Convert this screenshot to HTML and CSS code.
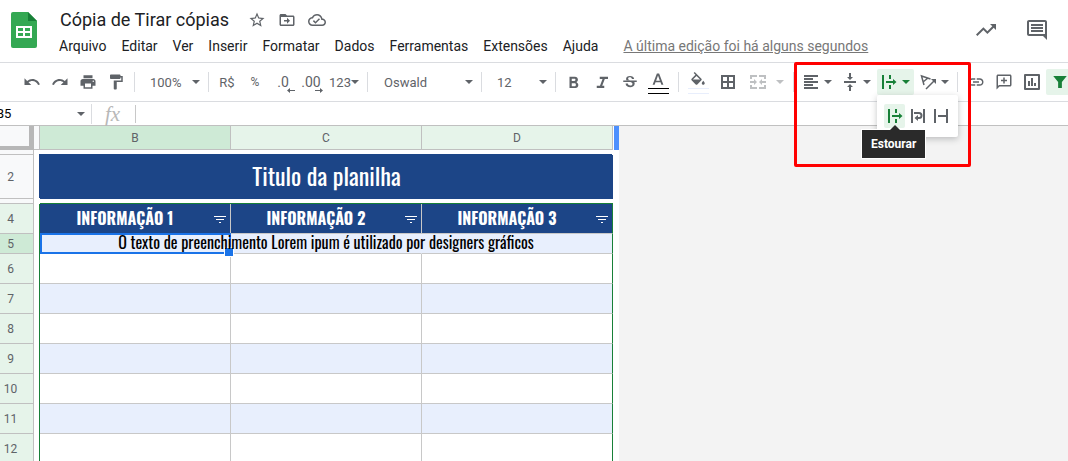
FILE: index.html
```
<!DOCTYPE html>
<html lang="pt-BR">
<head>
    <meta charset="UTF-8">
    <meta name="viewport" content="width=device-width, initial-scale=1.0">
    <title>Cópia de Tirar cópias</title>
    <link rel="stylesheet" href="styles.css">
</head>
<body>
    <header class="header">
        <svg class="logo" viewBox="0 0 26 36">
            <path fill="#34a853" d="M2 0h15l9 9v25a2 2 0 0 1-2 2H2a2 2 0 0 1-2-2V2a2 2 0 0 1 2-2z"/>
            <path fill="#188038" d="M17 0l9 9h-9z"/>
            <path fill="#fff" fill-rule="evenodd" d="M5 14h16v12H5zM7 16v3h5v-3zM14 16v3h5v-3zM7 21v3h5v-3zM14 21v3h5v-3z"/>
        </svg>
        <div class="doc">
            <div class="title-row">
                <h1>Cópia de Tirar cópias</h1>
                <button class="icon-btn" aria-label="Com estrela"><svg class="icon" viewBox="0 0 24 24"><path d="M22 9.24l-7.19-.62L12 2 9.19 8.63 2 9.24l5.46 4.73L5.82 21 12 17.27 18.18 21l-1.63-7.03L22 9.24zM12 15.4l-3.76 2.27 1-4.28-3.32-2.88 4.38-.38L12 6.1l1.71 4.04 4.38.38-3.32 2.88 1 4.28L12 15.4z"/></svg></button>
                <button class="icon-btn" aria-label="Mover"><svg class="icon" viewBox="0 0 24 24"><path d="M20 6h-8l-2-2H4c-1.100 0-2 .9-2 2v12c0 1.100.9 2 2 2h16c1.100 0 2-.9 2-2V8c0-1.100-.9-2-2-2zm0 12H4V8h16v10zM12 17l4-4-4-4v3H8v2h4z"/></svg></button>
                <button class="icon-btn" aria-label="Status do documento"><svg class="icon" viewBox="0 0 24 24"><path d="M19.350 10.040C18.670 6.590 15.640 4 12 4 9.110 4 6.600 5.640 5.350 8.040 2.340 8.360 0 10.910 0 14c0 3.310 2.690 6 6 6h13c2.760 0 5-2.240 5-5 0-2.640-2.050-4.780-4.650-4.960zM19 18H6c-2.210 0-4-1.790-4-4 0-2.050 1.530-3.760 3.560-3.970l1.070-.11.5-.95C8.080 7.140 9.940 6 12 6c2.620 0 4.880 1.860 5.390 4.430l.3 1.500 1.530.11c1.560.1 2.780 1.410 2.780 2.960 0 1.650-1.350 3-3 3zm-9-3.820l-2.090-2.090L6.500 13.500 10 17l6.010-6.010-1.410-1.410z"/></svg></button>
            </div>
            <nav class="menus">
                <button>Arquivo</button>
                <button>Editar</button>
                <button>Ver</button>
                <button>Inserir</button>
                <button>Formatar</button>
                <button>Dados</button>
                <button>Ferramentas</button>
                <button>Extensões</button>
                <button>Ajuda</button>
                <a href="#historico">A última edição foi há alguns segundos</a>
            </nav>
        </div>
        <div class="header-actions">
            <button class="icon-btn" aria-label="Atividade"><svg viewBox="0 0 24 24" width="24" height="24"><path d="M16 6l2.290 2.290-4.880 4.880-4-4L2 16.590 3.410 18l6-6 4 4 6.300-6.290L22 12V6z"/></svg></button>
            <button class="icon-btn" aria-label="Comentários"><svg viewBox="0 0 24 24" width="24" height="24"><path d="M22 4c0-1.100-.9-2-2-2H4c-1.100 0-2 .9-2 2v12c0 1.100.9 2 2 2h14l4 4V4zM4 16V4h16v12zM6 12h12v2H6zM6 9h12v2H6zM6 6h12v2H6z"/></svg></button>
        </div>
    </header>

    <div class="toolbar">
        <div class="group">
            <button class="tool" aria-label="Desfazer"><svg class="icon" viewBox="0 0 24 24"><path d="M12.500 8c-2.650 0-5.050.99-6.900 2.600L2 7v9h9l-3.620-3.620c1.390-1.160 3.160-1.880 5.120-1.880 3.540 0 6.550 2.310 7.600 5.500l2.370-.78C21.080 11.030 17.150 8 12.500 8z"/></svg></button>
            <button class="tool" aria-label="Refazer"><svg class="icon" viewBox="0 0 24 24"><path d="M18.400 10.600C16.550 8.990 14.150 8 11.500 8c-4.650 0-8.580 3.030-9.960 7.220L3.900 16c1.050-3.190 4.050-5.500 7.600-5.500 1.950 0 3.730.72 5.120 1.880L13 16h9V7l-3.600 3.600z"/></svg></button>
            <button class="tool" aria-label="Imprimir"><svg class="icon" viewBox="0 0 24 24"><path d="M19 8H5c-1.660 0-3 1.340-3 3v6h4v4h12v-4h4v-6c0-1.660-1.340-3-3-3zm-3 11H8v-5h8v5zm3-7c-.55 0-1-.45-1-1s.45-1 1-1 1 .45 1 1-.45 1-1 1zm-1-9H6v4h12V3z"/></svg></button>
            <button class="tool" aria-label="Pintar formatação"><svg class="icon" viewBox="0 0 24 24"><path d="M18 4V3c0-.55-.45-1-1-1H5c-.55 0-1 .45-1 1v4c0 .55.45 1 1 1h12c.55 0 1-.45 1-1V6h1v4H9v11c0 .55.45 1 1 1h2c.55 0 1-.45 1-1v-9h8V4h-3z"/></svg></button>
        </div>
        <div class="dropdown">
            <select aria-label="Zoom"><option>100%</option></select>
            <span class="caret"></span>
        </div>
        <div class="group">
            <button class="tool">R$</button>
            <button class="tool percent">%</button>
            <button class="tool decimal">.0<svg viewBox="0 0 8 5"><path d="M0 2.500L3 0v2h5v1H3v2z"/></svg></button>
            <button class="tool decimal">.00<svg viewBox="0 0 8 5"><path d="M8 2.500L5 0v2H0v1h5v2z"/></svg></button>
            <button class="tool formats">123<span class="caret"></span></button>
        </div>
        <div class="dropdown font">
            <select aria-label="Fonte"><option>Oswald</option></select>
            <span class="caret"></span>
        </div>
        <div class="dropdown">
            <select aria-label="Tamanho da fonte"><option>12</option></select>
            <span class="caret"></span>
        </div>
        <div class="group">
            <button class="tool" aria-label="Negrito"><svg class="icon" viewBox="0 0 24 24"><path d="M15.600 11.790c.97-.67 1.650-1.770 1.650-2.790 0-2.260-1.750-4-4-4H6v15h8.040c2.090 0 3.710-1.700 3.710-3.790 0-1.520-.86-2.820-2.150-3.420zM9 7.500h3.500c.83 0 1.500.67 1.500 1.500s-.67 1.500-1.500 1.500H9v-3zm4 10H9V13.500h4c.83 0 1.500.67 1.500 2s-.67 2-1.500 2z"/></svg></button>
            <button class="tool" aria-label="Itálico"><svg class="icon" viewBox="0 0 24 24"><path d="M9 5v3h3.710l-3.420 9H5v3h10v-3h-2.710l3.420-9H20V5z"/></svg></button>
            <button class="tool" aria-label="Tachado"><svg class="icon" viewBox="0 0 24 24"><path d="M7.240 9.750c-.86-1.530-.46-3.600.84-4.700C10.600 2.900 17.600 3.500 17.500 8h-3c0-3-5.100-2.900-5-.4.100 1 1 1.600 2.500 2.150zM21 12v-2H3v2h9.620c2.500.9 2.600 1.500 2.600 2.500 0 2.800-6.100 2.700-6.100-.5h-3c-.1 6.500 12.100 6.800 12.100.4 0-.9-.1-1.700-.5-2.400z"/></svg></button>
            <button class="tool color" aria-label="Cor do texto"><svg class="icon" viewBox="0 0 24 24"><path d="M10.500 2L4.800 17h2.700l1.150-3.200h6.700L16.500 17h2.700L13.500 2zm-1 9.500L12 4.800l2.500 6.700z"/></svg></button>
        </div>
        <div class="group spaced">
            <button class="tool color fill" aria-label="Cor de preenchimento"><svg class="icon" viewBox="0 0 24 24"><path d="M16.560 8.940L7.620 0 6.210 1.410l2.380 2.380-5.150 5.150c-.59.59-.59 1.540 0 2.120l5.500 5.500c.59.59 1.540.59 2.120 0l5.500-5.500c.59-.58.59-1.530 0-2.120zM5.210 10L10 5.210 14.790 10zM19 11.500s-2 2.170-2 3.500c0 1.100.9 2 2 2s2-.9 2-2c0-1.330-2-3.500-2-3.500z"/></svg></button>
            <button class="tool" aria-label="Bordas"><svg class="icon" viewBox="0 0 18 18"><path d="M2 2v14h14V2zm6 12H4v-4h4zm0-6H4V4h4zm6 6h-4v-4h4zm0-6h-4V4h4z"/></svg></button>
            <button class="tool merge" disabled aria-label="Mesclar células"><svg class="icon" viewBox="0 0 18 18"><path d="M1 2h7v2H3v2H1zM10 2h7v4h-2V4h-5zM1 12h2v2h5v2H1zM15 12h2v4h-7v-2h5zM1 8h4V6l3 3-3 3v-2H1zM17 8h-4V6l-3 3 3 3v-2h4z"/></svg><span class="caret"></span></button>
        </div>
        <div class="group align-group">
            <button class="tool wide" aria-label="Alinhamento horizontal"><svg class="icon" viewBox="0 0 18 18"><path d="M2 2h14v2H2zM2 5h9v2H2zM2 8h14v2H2zM2 11h9v2H2zM2 14h14v2H2z"/></svg><span class="caret"></span></button>
            <button class="tool wide" aria-label="Alinhamento vertical"><svg class="icon" viewBox="0 0 18 18"><path d="M6 14h2v4h2v-4h2l-3-3zM12 4h-2V0H8v4H6l3 3zM3 8v2h12V8z"/></svg><span class="caret"></span></button>
            <div class="wrap-control">
                <button class="tool wide active" aria-label="Ajuste de texto"><svg class="icon" viewBox="0 0 18 18"><path d="M2 2h2v14H2zM9 2h2v4H9zM9 12h2v4H9zM6 8h7V6l3.500 3-3.500 3v-2H6z"/></svg><span class="caret"></span></button>
                <div class="wrap-menu">
                    <button class="active" aria-label="Estourar"><svg class="icon" viewBox="0 0 18 18"><path d="M2 2h2v14H2zM9 2h2v4H9zM9 12h2v4H9zM6 8h7V6l3.500 3-3.500 3v-2H6z"/></svg></button>
                    <button aria-label="Ajustar"><svg class="icon" viewBox="0 0 18 18"><path d="M2 2h2v14H2zM14 2h2v14h-2zM5 5h5a3.500 3.500 0 0 1 0 7H9v2l-3.500-3L9 8v2h1a1.500 1.500 0 0 0 0-3H5z"/></svg></button>
                    <button aria-label="Cortar"><svg class="icon" viewBox="0 0 18 18"><path d="M2 2h2v14H2zM14 2h2v14h-2zM6 8h8v2H6z"/></svg></button>
                    <span class="tooltip" role="tooltip">Estourar</span>
                </div>
            </div>
            <button class="tool wide" aria-label="Rotação de texto"><svg class="icon" viewBox="0 0 18 18"><path fill="none" stroke="#5f6368" stroke-width="1.500" d="M5 12L2.500 3l9 3M9 5l-5 4M7 16l8-8"/><path d="M17 6v5l-5-5z"/></svg><span class="caret"></span></button>
            <div class="highlight"></div>
        </div>
        <div class="group">
            <button class="tool" aria-label="Inserir link"><svg class="icon" viewBox="0 0 24 24"><path d="M3.900 12c0-1.710 1.390-3.100 3.100-3.100h4V7H7c-2.760 0-5 2.240-5 5s2.240 5 5 5h4v-1.900H7c-1.710 0-3.100-1.390-3.100-3.100zM8 13h8v-2H8v2zm9-6h-4v1.900h4c1.710 0 3.100 1.390 3.100 3.100s-1.390 3.100-3.100 3.100h-4V17h4c2.760 0 5-2.240 5-5s-2.240-5-5-5z"/></svg></button>
            <button class="tool" aria-label="Inserir comentário"><svg class="icon" viewBox="0 0 24 24"><path d="M20 2H4c-1.100 0-2 .9-2 2v18l4-4h14c1.100 0 2-.9 2-2V4c0-1.100-.9-2-2-2zm0 14H5.200L4 17.200V4h16zM11 14h2v-3h3V9h-3V6h-2v3H8v2h3z"/></svg></button>
            <button class="tool" aria-label="Inserir gráfico"><svg class="icon" viewBox="0 0 18 18"><path d="M2 1h14a1 1 0 0 1 1 1v14a1 1 0 0 1-1 1H2a1 1 0 0 1-1-1V2a1 1 0 0 1 1-1zm1 2v12h12V3zM5 8h2v5H5zM8 5h2v8H8zM11 10h2v3h-2z"/></svg></button>
            <button class="tool active" aria-label="Filtro"><svg class="icon" viewBox="0 0 24 24"><path d="M3 4h18l-6.500 8v8h-5v-8z"/></svg></button>
        </div>
    </div>

    <div class="formula-bar">
        <div class="name-box">
            <input type="text" value="B5" aria-label="Caixa de nome">
            <span class="caret"></span>
        </div>
        <label class="fx" for="formula">fx</label>
        <input class="formula" id="formula" type="text">
    </div>

    <main class="sheet">
        <table>
            <colgroup>
                <col class="col-head">
                <col class="col-edge">
                <col class="col-data">
                <col class="col-data">
                <col class="col-data">
                <col class="col-edge">
            </colgroup>
            <thead>
                <tr class="letters">
                    <th class="corner"></th>
                    <th class="edge"></th>
                    <th class="current">B</th>
                    <th>C</th>
                    <th>D</th>
                    <th class="freeze"></th>
                </tr>
            </thead>
            <tbody>
                <tr class="thin"><th></th><td></td><td colspan="3"></td><td></td></tr>
                <tr class="title">
                    <th>2</th><td></td>
                    <td class="banner" colspan="3">Titulo da planilha</td>
                    <td></td>
                </tr>
                <tr class="thin above-range"><th></th><td></td><td colspan="3"></td><td></td></tr>
                <tr class="range names">
                    <th>4</th><td></td>
                    <td>INFORMAÇÃO 1<button aria-label="Filtrar informação 1"><svg viewBox="0 0 12 7"><path d="M0 0h12v1H0zM2 3h8v1H2zM5 6h2v1H5z"/></svg></button></td>
                    <td>INFORMAÇÃO 2<button aria-label="Filtrar informação 2"><svg viewBox="0 0 12 7"><path d="M0 0h12v1H0zM2 3h8v1H2zM5 6h2v1H5z"/></svg></button></td>
                    <td>INFORMAÇÃO 3<button aria-label="Filtrar informação 3"><svg viewBox="0 0 12 7"><path d="M0 0h12v1H0zM2 3h8v1H2zM5 6h2v1H5z"/></svg></button></td>
                    <td></td>
                </tr>
                <tr class="range short band">
                    <th class="current">5</th><td></td>
                    <td class="selected"><span class="selection"></span></td>
                    <td class="spill"><div>O texto de preenchimento Lorem ipum é utilizado por designers gráficos</div></td>
                    <td></td><td></td>
                </tr>
                <tr class="range"><th>6</th><td></td><td></td><td></td><td></td><td></td></tr>
                <tr class="range band"><th>7</th><td></td><td></td><td></td><td></td><td></td></tr>
                <tr class="range"><th>8</th><td></td><td></td><td></td><td></td><td></td></tr>
                <tr class="range band"><th>9</th><td></td><td></td><td></td><td></td><td></td></tr>
                <tr class="range"><th>10</th><td></td><td></td><td></td><td></td><td></td></tr>
                <tr class="range band"><th>11</th><td></td><td></td><td></td><td></td><td></td></tr>
                <tr class="range"><th>12</th><td></td><td></td><td></td><td></td><td></td></tr>
            </tbody>
        </table>
    </main>
</body>
</html>
```
FILE: styles.css
```
* {
    box-sizing: border-box;
}

body {
    margin: 0;
    height: 100vh;
    display: flex;
    flex-direction: column;
    overflow: hidden;
    background: #fff;
    color: #202124;
    font-family: Roboto, "Liberation Sans", sans-serif;
    font-size: 14px;
}

button,
input,
select {
    margin: 0;
    padding: 0;
    border: 0;
    background: none;
    color: inherit;
    font: inherit;
}

button {
    cursor: pointer;
}

svg {
    display: block;
    fill: #5f6368;
}

.icon {
    width: 18px;
    height: 18px;
    flex: none;
}

.caret {
    flex: none;
    border: 4px solid transparent;
    border-top-color: #5f6368;
    border-bottom: 0;
}

/* header */
.header {
    display: flex;
    flex: none;
    height: 63px;
    border-bottom: 1px solid #dadce0;
}

.logo {
    width: 26px;
    height: 36px;
    margin: 12px 15px 0 11px;
}

.doc {
    flex: 1;
    padding-top: 8px;
}

.title-row {
    display: flex;
    align-items: center;
    gap: 12px;
    height: 24px;
    padding-left: 8px;
}

h1 {
    margin: 0 7px 0 0;
    font-size: 18px;
    font-weight: 400;
    line-height: 24px;
}

.menus {
    display: flex;
    align-items: center;
    gap: 1px;
    height: 28px;
    white-space: nowrap;
}

.menus button {
    padding: 0 7px;
}

.menus a {
    margin-left: 17px;
    color: #777;
}

.header-actions {
    display: flex;
    gap: 27px;
    padding: 18px 19px 0 0;
    align-items: flex-start;
}

/* toolbar */
.toolbar {
    display: flex;
    align-items: center;
    flex: none;
    height: 39px;
    padding-left: 18px;
    border-bottom: 1px solid #dadce0;
    color: #5f6368;
    font-size: 13px;
    white-space: nowrap;
}

.group {
    display: flex;
    flex: none;
}

.group + .dropdown::before,
.dropdown + .group::before,
.dropdown + .dropdown::before,
.group + .group::before {
    content: "";
    flex: none;
    align-self: center;
    width: 1px;
    height: 20px;
    margin: 0 4px;
    background: #dadce0;
}

.tool {
    display: flex;
    align-items: center;
    justify-content: center;
    flex: none;
    width: 28px;
    height: 26px;
}

.tool:disabled {
    opacity: 0.4;
}

.percent {
    font-size: 12px;
}

.dropdown {
    display: flex;
    align-items: center;
    flex: none;
    width: 74px;
    height: 26px;
}

.dropdown select {
    flex: 1;
    min-width: 0;
    padding-left: 11px;
    appearance: none;
}

.dropdown .caret {
    margin-right: 4px;
}

.dropdown.font {
    width: 114px;
}

.dropdown.font select {
    padding-left: 12px;
}

.decimal {
    position: relative;
    font-size: 14px;
}

.decimal svg {
    position: absolute;
    right: 2px;
    bottom: 2px;
    width: 8px;
    height: 5px;
}

.formats {
    width: 38px;
}

.color {
    position: relative;
    padding-bottom: 3px;
}

.color::after {
    content: "";
    position: absolute;
    left: 4px;
    right: 3px;
    bottom: 1px;
    height: 4px;
    border: 1px solid #000;
    border-width: 1px 0;
}

.fill::after {
    border-color: #e8eefc;
}

.spaced {
    gap: 2px;
}

.group.spaced::before {
    margin-right: 3px;
    margin-left: 6px;
}

.merge {
    width: 44px;
    gap: 9px;
}

.align-group {
    position: relative;
    gap: 2px;
}

.group.align-group::before {
    margin: 0 3px 0 5px;
}

.wide {
    justify-content: flex-start;
    width: 37px;
    gap: 4px;
    padding-left: 3px;
}

.active {
    background: #e6f4ea;
    border-radius: 2px;
}

.active svg {
    fill: #188038;
}

.active .caret {
    border-top-color: #188038;
}

.wrap-control {
    position: relative;
}

.wrap-menu {
    position: absolute;
    top: 26px;
    left: 0;
    z-index: 2;
    display: flex;
    gap: 2px;
    width: 81px;
    padding: 9px 7px;
    background: #fff;
    border-radius: 2px;
    box-shadow: 0 2px 6px rgba(60, 64, 67, 0.3);
}

.wrap-menu button {
    display: flex;
    align-items: center;
    justify-content: center;
    width: 21px;
    height: 24px;
}

.tooltip {
    position: absolute;
    top: 34px;
    left: -16px;
    padding: 0 9px;
    border: 1px solid #fff;
    background: #2a2a2a;
    color: #fff;
    font-size: 12px;
    font-weight: 700;
    line-height: 28px;
}

.tooltip::before {
    content: "";
    position: absolute;
    top: -5px;
    left: 28px;
    border: 5px solid transparent;
    border-top: 0;
    border-bottom-color: #2a2a2a;
}

.highlight {
    position: absolute;
    top: -7px;
    left: 6px;
    z-index: 3;
    width: 177px;
    height: 105px;
    border: 3px solid #f00;
    border-radius: 2px;
    pointer-events: none;
}

/* formula bar */
.formula-bar {
    display: flex;
    align-items: center;
    flex: none;
    height: 24px;
    border-bottom: 1px solid #c0c0c0;
}

.name-box {
    display: flex;
    align-items: center;
    width: 92px;
    height: 20px;
    padding-right: 6px;
    border-right: 1px solid #dadce0;
}

.name-box input {
    flex: 1;
    min-width: 0;
    margin-left: -4px;
    color: #000;
    font-size: 13px;
}

.fx {
    width: 44px;
    padding-left: 13px;
    border-right: 1px solid #c8c8c8;
    color: #b8b8b8;
    font: italic 21px/18px "Liberation Serif", serif;
}

.formula {
    flex: 1;
    padding: 0 6px;
    outline: none;
}

/* sheet */
.sheet {
    flex: 1;
    min-height: 0;
    overflow: hidden;
    background: #f3f3f3;
}

table {
    width: 619px;
    table-layout: fixed;
    border-spacing: 0;
    background: #fff;
    color: #000;
}

.col-head {
    width: 34px;
}

.col-edge {
    width: 6px;
}

.col-data {
    width: 191px;
}

tr {
    height: 30px;
}

th,
td {
    padding: 0;
    border: 0 solid #c8c8c8;
    text-align: center;
    vertical-align: middle;
}

th {
    border-color: #c0c0c0;
    border-width: 0 1px 1px 0;
    background: #f8f9fa;
    color: #5f6368;
    font-size: 12px;
    font-weight: 400;
    line-height: 14px;
}

tbody th {
    padding-right: 12px;
}

.letters {
    height: 24px;
}

.letters th {
    background: #e6f4ea;
}

.letters .corner {
    background: #f8f9fa;
    border-color: #b7b7b7;
    border-width: 0 5px 4px 0;
}

.letters .edge {
    background: #f8f9fa;
}

.letters .current,
.range .current {
    background: #ceead6;
}

.letters .freeze {
    border: 0;
    border-left: 1px solid #fff;
    background: #4d90fe;
}

.thin {
    height: 5px;
    font-size: 0;
    line-height: 0;
}

.title {
    height: 44px;
}

.banner {
    position: relative;
    padding-bottom: 4px;
    background: #1c4587;
    box-shadow: -1px -1px 0 #1c4587;
    color: #fff;
    font-family: Oswald, "Liberation Sans Narrow", sans-serif;
    font-size: 24px;
    line-height: 32px;
}

.above-range td:nth-child(3) {
    border-bottom: 1px solid #188038;
}

.range th {
    background: #e6f4ea;
}

.range td:nth-child(2) {
    border-right: 1px solid #188038;
}

.range td:nth-child(n+3):nth-child(-n+5) {
    border-width: 0 1px 1px 0;
}

.range td:nth-child(5) {
    border-right-color: #188038;
}

.band td:nth-child(n+3):nth-child(-n+5) {
    background: #e8effd;
}

.names td:nth-child(n+3):nth-child(-n+5) {
    position: relative;
    padding: 0 20px 2px 0;
    background: #1c4587;
    color: #fff;
    font-family: Oswald, "Liberation Sans Narrow", sans-serif;
    font-size: 16px;
    font-weight: 700;
    line-height: 20px;
}

.names button {
    position: absolute;
    top: 12px;
    right: 4px;
}

.names svg {
    width: 12px;
    height: 7px;
    fill: #fff;
}

.short {
    height: 20px;
}

.selected {
    position: relative;
}

.selection {
    position: absolute;
    inset: -1px -1px -1px 0;
    border: 2px solid #1a73e8;
}

.selection::after {
    content: "";
    position: absolute;
    right: -5px;
    bottom: -5px;
    width: 8px;
    height: 8px;
    border: 1px solid #fff;
    background: #1a73e8;
}

.short .spill:nth-child(4) {
    border-right-color: #e8effd;
}

/* centred text runs over the empty cells on both sides */
.spill div {
    position: relative;
    z-index: 1;
    display: flex;
    justify-content: center;
    font-family: Oswald, "Liberation Sans Narrow", sans-serif;
    font-size: 16px;
    line-height: 16px;
    padding-bottom: 3px;
    white-space: nowrap;
}
```
